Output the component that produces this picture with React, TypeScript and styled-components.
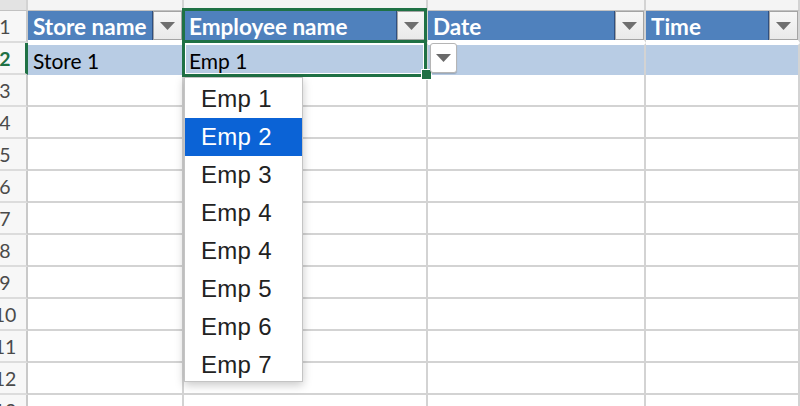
import React from 'react';
import styled, { createGlobalStyle } from 'styled-components';

const Global = createGlobalStyle`
  html, body { margin: 0; padding: 0; background: #fff; }
  body { width: 800px; height: 406px; overflow: hidden; font-family: Lato, "Open Sans", sans-serif; }
  * { box-sizing: border-box; }
`;

const GRID = '#d3d3d3';
const GREEN = '#1f7145';
const COLS = '28px 156px 244px 218px 1fr';

const Sheet = styled.div`
  position: relative;
  width: 800px;
  height: 406px;
  overflow: hidden;
  background: #fff;
`;

const Row = styled.div<{ $h: number }>`
  display: grid;
  grid-template-columns: ${COLS};
  height: ${(p) => p.$h}px;
`;

const BandCell = styled.div<{ $corner?: boolean }>`
  background: ${(p) => (p.$corner ? '#e3e3e3' : '#f4f4f4')};
  border-right: 2px solid ${GRID};
  border-bottom: 1px solid #c2c2c2;
`;

const RowHead = styled.div<{ $active?: boolean }>`
  position: relative;
  overflow: hidden;
  background: #f7f7f7;
  border-right: 2px solid ${(p) => (p.$active ? GREEN : '#c9c9c9')};
  border-bottom: 2px solid #dcdcdc;
  ${(p) => (p.$active ? 'border-right-width: 3px;' : '')}
`;

const RowLabel = styled.div<{ $active?: boolean }>`
  width: 48px;
  margin-left: -19px;
  text-align: center;
  line-height: 31px;
  font-size: 19.5px;
  color: ${(p) => (p.$active ? GREEN : '#4a4a4a')};
  font-weight: ${(p) => (p.$active ? 700 : 400)};
`;

const HeadCell = styled.div`
  display: flex;
  align-items: center;
  background: #4f81bd;
  border-bottom: 3px solid #fff;
  border-right: 2px solid ${GRID};
  padding-left: 5px;
  color: #fff;
  font-weight: 700;
  font-size: 22.5px;
  white-space: nowrap;
  overflow: hidden;
`;

const HeadText = styled.span`
  flex: 1;
  overflow: hidden;
  padding-top: 2px;
`;

const FilterButton = styled.div`
  flex: none;
  width: 29px;
  height: 29px;
  display: flex;
  align-items: center;
  justify-content: center;
  background: linear-gradient(#f7f7f7, #e9e9e9);
  border: 1px solid #a4a4a4;
  box-shadow: -1px 0 0 #2f4f80;
`;

const BodyCell = styled.div<{ $band?: boolean }>`
  display: flex;
  align-items: center;
  padding-left: 5px;
  font-size: 21px;
  color: #000;
  white-space: nowrap;
  border-right: 2px solid ${GRID};
  ${(p) =>
    p.$band
      ? 'background: #b8cce4; border-top: 2px solid #fff;'
      : `border-bottom: 2px solid ${GRID};`}
`;

const ColumnOutline = styled.div`
  position: absolute;
  left: 182px;
  top: 8px;
  width: 245px;
  height: 35px;
  border: 3px solid ${GREEN};
  border-bottom: none;
`;

const ActiveOutline = styled.div`
  position: absolute;
  left: 182px;
  top: 40px;
  width: 245px;
  height: 37px;
  border: 3px solid ${GREEN};
  box-shadow: inset 0 0 0 1px #fff;
`;

const FillHandle = styled.div`
  position: absolute;
  left: 421px;
  top: 69px;
  width: 11px;
  height: 11px;
  background: ${GREEN};
  border: 1px solid #fff;
`;

const ValidationButton = styled.div`
  position: absolute;
  left: 430px;
  top: 43px;
  width: 27px;
  height: 30px;
  display: flex;
  align-items: center;
  justify-content: center;
  background: #fff;
  border: 1px solid #b5b5b5;
  border-radius: 3px;
  box-shadow: 0 1px 1px rgba(0, 0, 0, 0.18);
`;

const ListBox = styled.div`
  position: absolute;
  left: 184px;
  top: 77px;
  width: 119px;
  height: 305px;
  padding-top: 2px;
  background: #fff;
  border: 1px solid #c4c4c4;
  box-shadow: 0 3px 9px rgba(0, 0, 0, 0.22);
  font-family: "Liberation Sans", Arial, sans-serif;
`;

const ListItem = styled.div<{ $selected?: boolean }>`
  height: 38px;
  display: flex;
  align-items: center;
  padding-left: 16px;
  font-size: 24px;
  letter-spacing: 0.3px;
  color: ${(p) => (p.$selected ? '#fff' : '#222')};
  background: ${(p) => (p.$selected ? '#0b63d6' : 'transparent')};
`;

const Triangle = ({ color = '#6f6f6f' }: { color?: string }) => (
  <svg width="15" height="8" viewBox="0 0 15 8">
    <polygon points="0,0 15,0 7.5,8" fill={color} />
  </svg>
);

const headers = ['Store name', 'Employee name', 'Date', 'Time'];
const items = ['Emp 1', 'Emp 2', 'Emp 3', 'Emp 4', 'Emp 4', 'Emp 5', 'Emp 6', 'Emp 7'];
const emptyRows = [3, 4, 5, 6, 7, 8, 9, 10, 11, 12, 13];

export default function App() {
  return (
    <>
      <Global />
      <Sheet>
        <Row $h={11}>
          <BandCell $corner />
          <BandCell />
          <BandCell />
          <BandCell />
          <BandCell />
        </Row>
        <Row $h={32}>
          <RowHead>
            <RowLabel>1</RowLabel>
          </RowHead>
          {headers.map((h) => (
            <HeadCell key={h}>
              <HeadText>{h}</HeadText>
              <FilterButton>
                <Triangle />
              </FilterButton>
            </HeadCell>
          ))}
        </Row>
        <Row $h={32}>
          <RowHead $active>
            <RowLabel $active>2</RowLabel>
          </RowHead>
          <BodyCell $band>Store 1</BodyCell>
          <BodyCell $band>Emp 1</BodyCell>
          <BodyCell $band />
          <BodyCell $band />
        </Row>
        {emptyRows.map((n) => (
          <Row $h={32} key={n}>
            <RowHead>
              <RowLabel>{n}</RowLabel>
            </RowHead>
            <BodyCell />
            <BodyCell />
            <BodyCell />
            <BodyCell />
          </Row>
        ))}
        <ColumnOutline />
        <ActiveOutline />
        <FillHandle />
        <ValidationButton>
          <Triangle color="#6a6a6a" />
        </ValidationButton>
        <ListBox>
          {items.map((it, i) => (
            <ListItem key={i} $selected={i === 1}>
              {it}
            </ListItem>
          ))}
        </ListBox>
      </Sheet>
    </>
  );
}
